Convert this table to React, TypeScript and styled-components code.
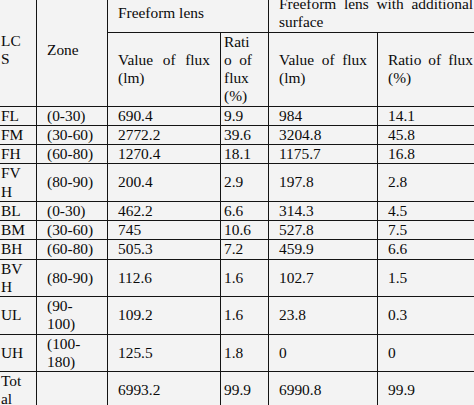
import React from "react";
import styled, { createGlobalStyle } from "styled-components";

type Pad = "first" | "wide" | "narrow";

const rows: string[][] = [
  ["FL", "(0-30)", "690.4", "9.9", "984", "14.1"],
  ["FM", "(30-60)", "2772.2", "39.6", "3204.8", "45.8"],
  ["FH", "(60-80)", "1270.4", "18.1", "1175.7", "16.8"],
  ["FVH", "(80-90)", "200.4", "2.9", "197.8", "2.8"],
  ["BL", "(0-30)", "462.2", "6.6", "314.3", "4.5"],
  ["BM", "(30-60)", "745", "10.6", "527.8", "7.5"],
  ["BH", "(60-80)", "505.3", "7.2", "459.9", "6.6"],
  ["BVH", "(80-90)", "112.6", "1.6", "102.7", "1.5"],
  ["UL", "(90-100)", "109.2", "1.6", "23.8", "0.3"],
  ["UH", "(100-180)", "125.5", "1.8", "0", "0"],
  ["Total", "", "6993.2", "99.9", "6990.8", "99.9"],
];

// padding kind for each column
const pads: Pad[] = ["first", "wide", "wide", "narrow", "wide", "wide"];
const widths = [46, 71, 113, 48, 109, 106];

function App() {
  return (
    <>
      <GlobalStyle />
      <Page>
        <Table>
          <colgroup>
            {widths.map((w, i) => (
              <col key={i} style={{ width: w }} />
            ))}
          </colgroup>
          <thead>
            <tr>
              <Cell as="th" rowSpan={2} $pad="first">
                LCS
              </Cell>
              <Cell as="th" rowSpan={2} $pad="wide">
                Zone
              </Cell>
              <Cell as="th" colSpan={2} $pad="wide">
                Freeform lens
              </Cell>
              <Cell as="th" colSpan={2} $pad="wide">
                Freeform lens with additional surface
              </Cell>
            </tr>
            <tr>
              <Cell as="th" $pad="wide">
                Value of flux (lm)
              </Cell>
              <Cell as="th" $pad="narrow">
                Ratio of flux (%)
              </Cell>
              <Cell as="th" $pad="wide">
                Value of flux (lm)
              </Cell>
              <Cell as="th" $pad="wide">
                Ratio of flux (%)
              </Cell>
            </tr>
          </thead>
          <tbody>
            {rows.map((r) => (
              <tr key={r[0]}>
                {r.map((v, i) => (
                  <Cell key={i} $pad={pads[i]}>
                    {v}
                  </Cell>
                ))}
              </tr>
            ))}
          </tbody>
        </Table>
      </Page>
    </>
  );
}

const GlobalStyle = createGlobalStyle`
  html, body {
    margin: 0;
    padding: 0;
    overflow: hidden;
    background: #f3f3f3;
  }
`;

const Page = styled.div`
  width: 474px;
  height: 405px;
  overflow: hidden;
  background: #f3f3f3;
`;

const Table = styled.table`
  margin: -6px 0 0 -10px;
  width: 493px;
  table-layout: fixed;
  border-collapse: collapse;
  font-family: "Liberation Serif", "Times New Roman", serif;
  font-size: 15.4px;
  line-height: 18.25px;
  color: #0a0a0a;
`;

const Cell = styled.td<{ $pad: Pad }>`
  border: 1px solid #141414;
  padding: ${(p) =>
    p.$pad === "first" ? "0 9px 0 10px" : p.$pad === "narrow" ? "0 16px 0 3px" : "0 10px"};
  vertical-align: middle;
  text-align: justify;
  font-weight: normal;
  word-break: ${(p) => (p.$pad === "wide" ? "normal" : "break-all")};
`;

export default App;
